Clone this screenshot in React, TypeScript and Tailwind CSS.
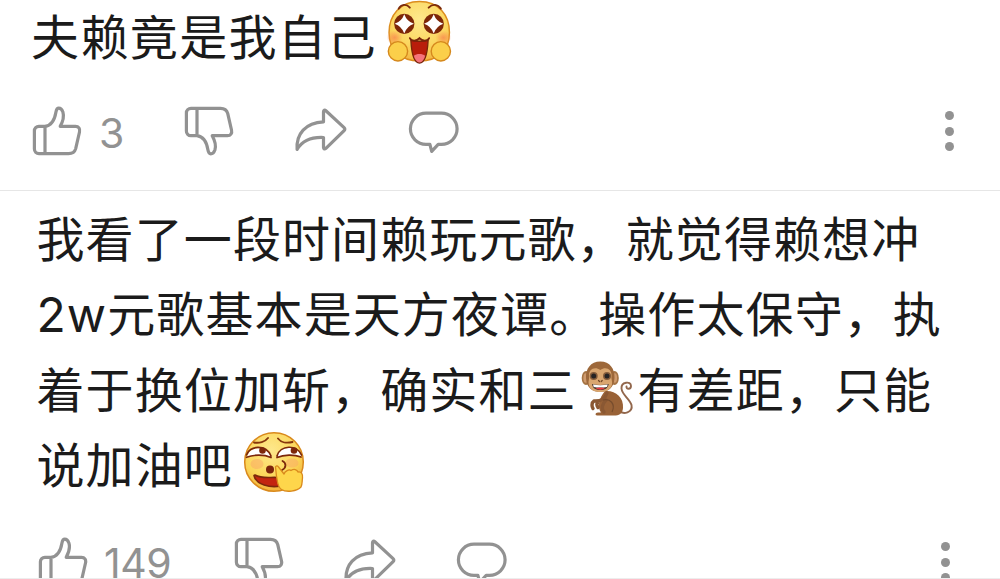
import type { ReactNode } from "react";
import clsx from "clsx";

function Icon({ children, className, w = 50 }: { children: ReactNode; className?: string; w?: number }) {
  return (
    <svg
      viewBox={`0 0 ${w} 50`}
      aria-hidden="true"
      fill="none"
      stroke="currentColor"
      strokeWidth="3.2"
      strokeLinejoin="round"
      strokeLinecap="round"
      className={clsx("h-[50px] shrink-0", className)}
    >
      {children}
    </svg>
  );
}

const thumb =
  "M13 20.3H7A4.5 4.5 0 0 0 2.4 25v18A4.6 4.6 0 0 0 7 47.6h29.5c4 0 6.300-1.800 7.200-5L47.500 26c.8-3.300-.9-5.700-4-5.700H28.200c2.800-5 3.900-10.300 2.700-14.300C30 3.500 28.700 2.200 26.800 2.200c-2 0-2.500 1.600-2.900 4C22.700 13.500 19.500 19.500 13 20.300V47.600";

function LikeIcon() {
  return (
    <Icon className="w-[50px]">
      <path d={thumb} />
    </Icon>
  );
}

function DislikeIcon() {
  return (
    <Icon className="w-[50px] -scale-y-100">
      <path d={thumb} />
    </Icon>
  );
}

function ShareIcon() {
  return (
    <Icon w={54} className="w-[54px]">
      <path d="M29.500 15.800V5.800c0-1.600 1.200-2.200 2.400-1.100L50.100 21.600c1 .9 1 2 0 3L31.900 42.300C30.700 43.500 29.500 43 29.500 41.500V31.500C18.500 31 8.500 34.500 3.100 43.400 2 28 11.500 16.500 29.500 15.800Z" />
    </Icon>
  );
}

function ReplyIcon() {
  return (
    <Icon w={54} className="w-[54px]">
      <path d="M18 7.200H33.500a15.600 15.600 0 0 1 0 31.200H30.200L23.700 45.300 21.900 38.400H18a15.600 15.600 0 0 1 0-31.200Z" />
    </Icon>
  );
}

function MoreIcon() {
  return (
    <div className="flex flex-col gap-[6.500px] pt-[5px]">
      <span className="size-[9px] rounded-full bg-[#929292]" />
      <span className="size-[9px] rounded-full bg-[#929292]" />
      <span className="size-[9px] rounded-full bg-[#929292]" />
    </div>
  );
}

function StarryFace() {
  return (
    <svg viewBox="0 0 64 64" aria-hidden="true" className="size-[65px] shrink-0">
      <defs>
        <radialGradient id="starSkin" cx="0.5" cy="0.3" r="0.75">
          <stop offset="0" stopColor="#fee88c" />
          <stop offset="0.6" stopColor="#fbd760" />
          <stop offset="1" stopColor="#f2b03c" />
        </radialGradient>
        <radialGradient id="starBlush">
          <stop offset="0" stopColor="#f98a50" stopOpacity="0.8" />
          <stop offset="1" stopColor="#f98a50" stopOpacity="0" />
        </radialGradient>
      </defs>
      <path
        d="M32 1.500C51 1.500 61.500 15 61.500 32S51 60 32 60 2 49 2 32 13 1.500 32 1.500Z"
        fill="url(#starSkin)"
        stroke="#dc8d1f"
        strokeWidth="1.400"
      />
      <ellipse cx="7.500" cy="37" rx="8" ry="7" fill="url(#starBlush)" />
      <ellipse cx="55.500" cy="37" rx="8" ry="7" fill="url(#starBlush)" />
      <path d="M11.500 8.500C14 4 19 3.500 22.500 7.500M41 7.500C45 3.500 50 4 53 8.500" fill="none" stroke="#7b2a0b" strokeWidth="1.900" strokeLinecap="round" />
      <circle cx="17" cy="23.500" r="10" fill="#7d2708" />
      <circle cx="46" cy="23.500" r="10" fill="#7d2708" />
      <path d="M17 14Q19.500 21 26.500 23.500 19.500 26 17 33 14.500 26 7.500 23.500 14.500 21 17 14Z" fill="#fff" />
      <path d="M46 14Q48.500 21 55.500 23.500 48.500 26 46 33 43.500 26 36.500 23.500 43.500 21 46 14Z" fill="#fff" />
      <circle cx="10.800" cy="50.500" r="9.500" fill="#fbcf4a" stroke="#d5881d" strokeWidth="1.400" />
      <circle cx="53" cy="50.500" r="9.500" fill="#fbcf4a" stroke="#d5881d" strokeWidth="1.400" />
      <path d="M23.500 39.500C28 41 36 41 40.500 39.500 40 49 38 62 32 62 26 62 24 49 23.500 39.500Z" fill="#b91d0b" stroke="#78250b" strokeWidth="1.300" />
      <path d="M26.500 55C29 52.500 35 52.500 37.500 55 36.500 59 34.500 61.500 32 61.500S27.500 59 26.500 55Z" fill="#f5747b" />
      <path d="M22.500 37.500C24 40.500 29 41 32 37.500 35 41 40 40.500 41.500 37.500" fill="none" stroke="#78250b" strokeWidth="1.800" strokeLinecap="round" />
    </svg>
  );
}

function SmirkFace() {
  return (
    <svg viewBox="0 0 62 62" aria-hidden="true" className="size-[62px] shrink-0">
      <defs>
        <radialGradient id="smirkSkin" cx="0.45" cy="0.3" r="0.75">
          <stop offset="0" stopColor="#fee88c" />
          <stop offset="0.65" stopColor="#fbd557" />
          <stop offset="1" stopColor="#f0aa34" />
        </radialGradient>
      </defs>
      <circle cx="31" cy="31" r="29.300" fill="url(#smirkSkin)" stroke="#d9891c" strokeWidth="1.500" />
      <ellipse cx="14" cy="33" rx="6.500" ry="5" fill="#f9a866" opacity="0.5" />
      <ellipse cx="49" cy="32" rx="6.500" ry="4.500" fill="#f9a866" opacity="0.5" />
      <path d="M11 11.500C16 12.500 22 11 25 7M35 7.500C38 11.500 44 12.500 49.500 11" fill="none" stroke="#86360d" strokeWidth="1.900" strokeLinecap="round" />
      <path d="M4 26C6 15 23 13.500 28.500 26 21 23.500 12 24 4 26Z" fill="#fff" />
      <path d="M34 26C37 14 54 13.500 58.500 25 50 23.500 42 24 34 26Z" fill="#fff" />
      <circle cx="19.500" cy="19.500" r="3.300" fill="#7c280b" />
      <circle cx="51" cy="19.500" r="3.300" fill="#7c280b" />
      <path d="M3.500 24C6 14.500 23 13 28 25M3.500 26.300C11 23.500 21 23.300 28 26.500M34 25C37 14 54 13 58.500 24M34 26.500C41 23.500 51 23.300 58 26" fill="none" stroke="#7c280b" strokeWidth="1.700" strokeLinecap="round" />
      <circle cx="27" cy="38.500" r="4" fill="#7c240b" />
      <path d="M12 44C19 48 27 46 34 46.500L38 55C27 57 13 54 11 44.500Z" fill="#c32510" stroke="#7c280b" strokeWidth="1.600" strokeLinejoin="round" />
      <path d="M39.500 30C43.500 32 43.500 37 39 39" fill="none" stroke="#7c280b" strokeWidth="1.800" strokeLinecap="round" />
      <path
        d="M32.500 36C33 34.500 34.500 34.500 35.500 36L41 43C42 40 46 38 48 39.500 51 37.500 54 38.500 55 41 58.500 40.500 60 43 59.500 47 59 50 59.500 53 58 56 54 60.500 43 61.500 38.500 58.500 34 55.500 34.500 49 33.500 45.500Z"
        fill="#fed64b"
        stroke="#d9891c"
        strokeWidth="1.300"
        strokeLinejoin="round"
      />
    </svg>
  );
}

function Monkey() {
  return (
    <svg viewBox="0 0 54 58" aria-hidden="true" className="h-[58px] w-[54px] shrink-0">
      <path d="M36 50C43 56 52 52 50.500 45 49 39 41 35 40.500 28.500 40 22 50 20.500 50 26 50 29.500 45 29.800 45.500 26.500" fill="none" stroke="#92674c" strokeWidth="1.900" strokeLinecap="round" />
      <path d="M24 31C34 30 43 37 42 48 41.500 54 38 55.500 33 55.500H16C14 55.500 14 52.500 17 52.500H20C16 47 18 38 24 31Z" fill="#996237" />
      <path d="M26 33C24 39 19 41.500 13 41 10 43 11 47 12 48.500M17 42C15 44 16 46 17 47.500M25 40C21 44 20 49 23 52" fill="none" stroke="#8a5833" strokeWidth="3.400" strokeLinecap="round" strokeLinejoin="round" />
      <path d="M22 40C29 38 35 44 31 52" fill="none" stroke="#764c2d" strokeWidth="1.200" />
      <ellipse cx="5" cy="18" rx="4.300" ry="7" fill="#a57444" />
      <ellipse cx="33.500" cy="18" rx="4.300" ry="7" fill="#a57444" />
      <ellipse cx="4.800" cy="18" rx="2.400" ry="4.700" fill="#cf9b6e" />
      <ellipse cx="33.700" cy="18" rx="2.400" ry="4.700" fill="#cf9b6e" />
      <path d="M19.300 1.500C29 1.500 34 9 33.500 18 33 28 27 32 19.300 32S5.500 28 5 18C4.500 9 9.500 1.500 19.300 1.500Z" fill="#9d683a" />
      <path d="M19.300 10C25 6 31 9.500 30.500 16 30 19 31.500 21 31 24.500 29.500 30 25 32 19.300 32S9 30 7.700 24.500C7 21 8.700 19 8 16 7.500 9.500 13.500 6 19.300 10Z" fill="#d9a66f" />
      <circle cx="12.700" cy="16" r="4" fill="#855d3b" />
      <circle cx="26" cy="16" r="4" fill="#855d3b" />
      <circle cx="12.700" cy="16" r="2.500" fill="#252323" />
      <circle cx="26" cy="16" r="2.500" fill="#252323" />
      <path d="M17.500 20.500L18.500 21.500M21.200 20.500L20.200 21.500" stroke="#704727" strokeWidth="1.200" strokeLinecap="round" />
      <path d="M11 24Q19.300 26 27.700 24C27 28.500 23.500 30 19.300 30S11.600 28.500 11 24Z" fill="#47342b" />
      <path d="M12 24.500Q19.300 26 26.700 24.500L26 27Q19.300 28 12.700 27Z" fill="#fff" />
      <path d="M14.500 28.500C17.500 27 21 27 24 28.500 21 30 17.500 30 14.500 28.500Z" fill="#ec3d40" />
    </svg>
  );
}

function Line({ children }: { children: ReactNode }) {
  return <div className="flex h-[75.500px] items-center whitespace-nowrap">{children}</div>;
}

export default function App() {
  return (
    <main className="flex h-[579px] w-[1000px] flex-col overflow-hidden bg-white font-['Inter','Noto_Sans_CJK_SC',sans-serif] text-[48px] leading-none tracking-[1.100px] text-[#1b1b1b]">
      <article className="flex h-[190px] shrink-0 flex-col pl-[31px]">
        <div className="flex h-[76px] items-center whitespace-nowrap">
          <span className="tracking-[1.400px]">夫赖竟是我自己</span>
          <span className="-mt-[11px] ml-[10px]">
            <StarryFace />
          </span>
        </div>
        <div className="mt-[30px] flex items-start text-[#929292]">
          <div className="flex w-[153px] items-center pl-[1px]">
            <LikeIcon />
            <span className="ml-[17px] mt-[5px] text-[41px] tracking-normal">3</span>
          </div>
          <div className="w-[110px]">
            <DislikeIcon />
          </div>
          <div className="w-[114px]">
            <ShareIcon />
          </div>
          <ReplyIcon />
          <div className="ml-auto mr-[46px]">
            <MoreIcon />
          </div>
        </div>
      </article>

      <article className="flex h-[388px] shrink-0 flex-col border-t border-[#e6e6e6] pl-[36.500px] pt-[11px]">
        <Line>我看了一段时间赖玩元歌，就觉得赖想冲</Line>
        <Line>2w元歌基本是天方夜谭。操作太保守，执</Line>
        <Line>
          着于换位加斩，确实和三
          <span className="-mt-[3px] ml-[4.500px] mr-[2.500px]">
            <Monkey />
          </span>
          有差距，只能
        </Line>
        <Line>
          说加油吧
          <span className="-mt-[8px] ml-[10.500px]">
            <SmirkFace />
          </span>
        </Line>
        <div className="mt-[33px] flex h-[41px] items-start text-[#929292]">
          <div className="flex w-[197.500px] shrink-0 items-center pl-[1.500px]">
            <LikeIcon />
            <span className="ml-[16px] mt-[3px] text-[41px] tracking-[-0.500px]">149</span>
          </div>
          <div className="w-[109px]">
            <DislikeIcon />
          </div>
          <div className="w-[113px]">
            <ShareIcon />
          </div>
          <ReplyIcon />
          <div className="ml-auto mr-[50px]">
            <MoreIcon />
          </div>
        </div>
      </article>
      {/* next divider, sits over the clipped icons */}
      <div className="relative h-px shrink-0 bg-[#ededed]" />
    </main>
  );
}
